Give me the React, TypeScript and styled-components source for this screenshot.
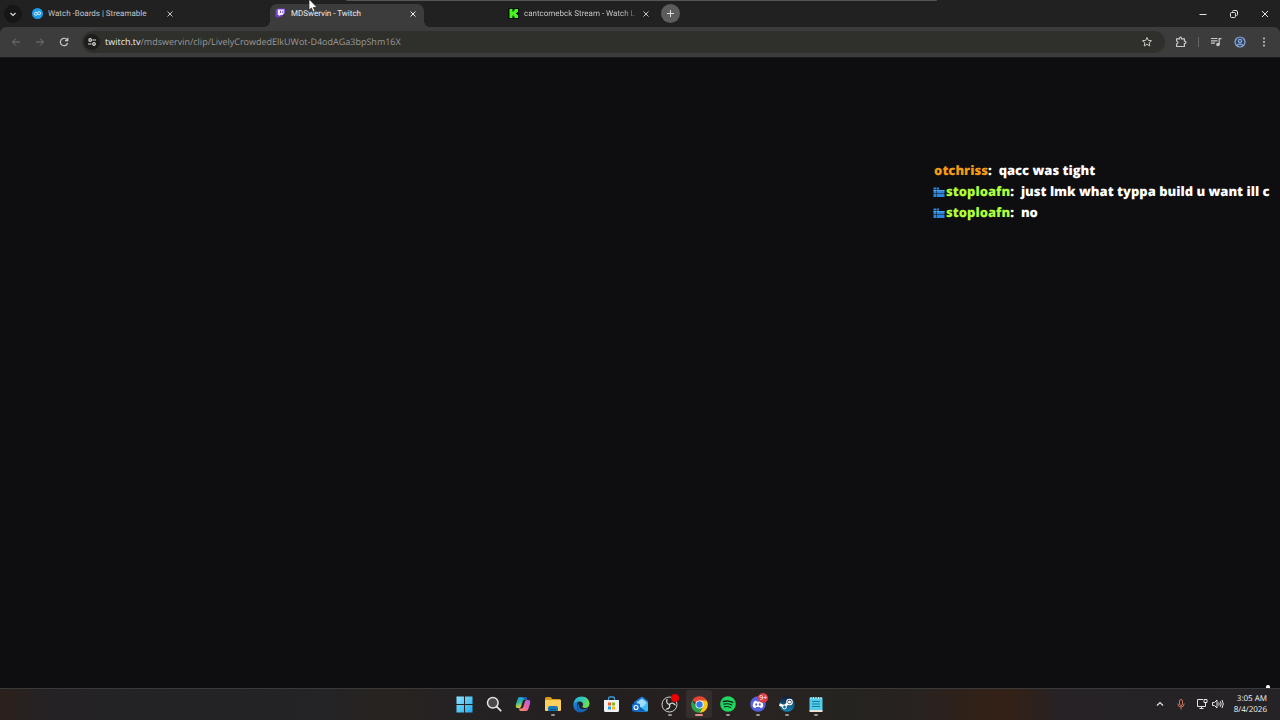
import React from "react";
import styled, { createGlobalStyle, css } from "styled-components";

const GlobalStyle = createGlobalStyle`
  * { box-sizing: border-box; }
  body { margin: 0; background: #0e0e10; font-family: "Open Sans", "Noto Sans", sans-serif; color: #e3e3e3; text-rendering: geometricPrecision; }
  button, input { font: inherit; color: inherit; }
  svg { display: block; flex: none; }
`;

const Desktop = styled.div`
  position: relative;
  display: flex;
  flex-direction: column;
  min-height: 100vh;
  overflow: hidden;
`;

const plainButton = css`
  display: flex;
  align-items: center;
  justify-content: center;
  flex: none;
  padding: 0;
  border: 0;
  background: none;
`;

const TabStrip = styled.header`
  display: flex;
  align-items: center;
  height: 27px;
  padding-left: 4px;
  background: #212121;
`;

const RoundButton = styled.button<{ $size: number; $bg: string; $color?: string }>`
  ${plainButton}
  width: ${(p) => p.$size}px;
  height: ${(p) => p.$size}px;
  border-radius: 50%;
  background: ${(p) => p.$bg};
  color: ${(p) => p.$color ?? "#dcdcdc"};
`;

const NewTab = styled(RoundButton)`
  margin-left: 4px;
`;

const Tab = styled.div<{ $active?: boolean; $gap: number }>`
  position: relative;
  display: flex;
  align-items: center;
  flex: none;
  width: 154px;
  height: 23px;
  margin-left: ${(p) => p.$gap}px;
  align-self: flex-end;
  padding: 0 5px 4px 5px;
  border-radius: 7px 7px 0 0;
  background: ${(p) => (p.$active ? "#3c3c3c" : "transparent")};
  color: ${(p) => (p.$active ? "#eeeeee" : "#c4c4c4")};
  ${(p) =>
    p.$active &&
    css`
      &::before, &::after {
        content: "";
        position: absolute;
        bottom: 0;
        width: 6px;
        height: 6px;
      }
      &::before { left: -6px; background: radial-gradient(circle at 0 0, transparent 6px, #3c3c3c 6px); }
      &::after { right: -6px; background: radial-gradient(circle at 100% 0, transparent 6px, #3c3c3c 6px); }
    `}
`;

const TabTitle = styled.span<{ $fade?: boolean }>`
  flex: 1;
  min-width: 0;
  margin-left: 5px;
  overflow: hidden;
  white-space: nowrap;
  font-family: Roboto, "Open Sans", sans-serif;
  font-size: 8px;
  line-height: 12px;
  ${(p) => p.$fade && css`mask-image: linear-gradient(to right, #000 88%, transparent 104%);`}
`;

const TabClose = styled.button`
  ${plainButton}
  width: 12px;
  height: 12px;
  margin-left: 4px;
`;

const WindowButtons = styled.div`
  display: flex;
  margin-left: auto;
`;

const WindowButton = styled.button`
  ${plainButton}
  width: 31px;
  height: 27px;
`;

const Toolbar = styled.nav`
  display: flex;
  align-items: center;
  height: 31px;
  padding: 0 4px 0 4px;
  background: #3c3c3c;
  border-bottom: 1px solid #1a1a1b;
  border-radius: 6px 6px 0 0;
`;

const ToolbarBack = styled.div`
  background: #212121;
`;

const ToolButton = styled.button<{ $dim?: boolean }>`
  ${plainButton}
  width: 24px;
  height: 24px;
  color: ${(p) => (p.$dim ? "#757575" : "#c7c7c7")};
`;

const AddressBar = styled.div`
  display: flex;
  align-items: center;
  flex: 1;
  min-width: 0;
  height: 22px;
  margin: 0 4px 0 6px;
  padding: 0 6px 0 2px;
  border-radius: 11px;
  background: #2f2f2b;
`;

const Url = styled.a`
  flex: 1;
  min-width: 0;
  margin-left: 5px;
  overflow: hidden;
  white-space: nowrap;
  font-size: 9px;
  line-height: 14px;
  color: #9b9b99;
  text-decoration: none;
  b { font-weight: 500; color: #f0f0f0; }
`;

const Divider = styled.span`
  width: 1px;
  height: 10px;
  margin: 0 5px;
  background: #666;
`;

const Page = styled.main`
  flex: 1;
  min-width: 0;
  overflow: hidden;
  padding-top: 102px;
  background: #0e0e10;
`;

const Chat = styled.ul`
  margin: 0 0 0 72.9%;
  padding: 0;
  list-style: none;
`;

const ChatLine = styled.li`
  display: flex;
  align-items: center;
  height: 21px;
  white-space: nowrap;
  font-size: 13px;
  line-height: 21px;
  font-weight: 800;
  color: #fff;
`;

const ChatName = styled.span<{ $color: string }>`
  margin-left: 1px;
  color: ${(p) => p.$color};
`;

const ChatText = styled.span`
  margin-left: 7px;
`;

const Taskbar = styled.footer`
  display: grid;
  grid-template-columns: 1fr 382px 1fr;
  height: 32px;
  border-top: 1px solid #3a3a3a;
  background: linear-gradient(to right, #2c201c 0, #242224 4%, #232326 20%, #242325 26%, #28231f 30%, #252224 36%,
    #241f1f 48%, #292322 60%, #252320 66%, #282220 72%, #332117 77%, #332117 79%, #262225 83%, #252326 100%);
`;

const Apps = styled.div`
  display: grid;
  grid-template-columns: repeat(13, 1fr);
  grid-column: 2;
  padding-left: 1px;
`;

const AppButton = styled.button<{ $running?: boolean; $active?: boolean }>`
  ${plainButton}
  position: relative;
  height: 30px;
  &::before {
    content: "";
    position: absolute;
    inset: 1px 2px 1px;
    border-radius: 3px;
    background: ${(p) => (p.$active ? "#352e2c" : "transparent")};
  }
  &::after {
    content: "";
    position: absolute;
    bottom: 3px;
    left: calc(50% - ${(p) => (p.$active ? 4 : 2)}px);
    width: ${(p) => (p.$active ? 8 : 4)}px;
    height: 2px;
    border-radius: 1px;
    background: ${(p) => (p.$active ? "#e58f80" : p.$running ? "#969392" : "transparent")};
  }
  svg { position: relative; }
`;

const Badge = styled.span<{ $dot?: boolean }>`
  position: absolute;
  top: ${(p) => (p.$dot ? 5 : 4)}px;
  right: ${(p) => (p.$dot ? 5 : 4)}px;
  width: ${(p) => (p.$dot ? 8 : 10)}px;
  height: ${(p) => (p.$dot ? 8 : 10)}px;
  border-radius: 50%;
  background: ${(p) => (p.$dot ? "#ee0000" : "#d83b46")};
  color: #fff;
  font-size: 7px;
  line-height: 10px;
  text-align: center;
`;

const Tray = styled.div`
  display: flex;
  align-items: center;
  justify-content: flex-end;
  padding: 0 13px 1px 0;
`;

const TrayButton = styled.button<{ $width: number; $color?: string }>`
  ${plainButton}
  width: ${(p) => p.$width}px;
  height: 28px;
  color: ${(p) => p.$color ?? "#e4e4e4"};
`;

const Clock = styled.time`
  margin-left: 6px;
  width: 37px;
  white-space: nowrap;
  display: flex;
  flex-direction: column;
  align-items: flex-end;
  font-size: 8px;
  line-height: 11px;
  color: #f2f2f2;
`;

const TopOverlay = styled.div`
  position: absolute;
  top: 0;
  left: 27%;
  right: 26.8%;
  height: 1px;
  background: #555;
  border-radius: 0 0 4px 4px;
`;

const Pointer = styled.svg`
  position: absolute;
  top: 0;
  left: 308px;
`;

const PagePip = styled.span`
  position: absolute;
  right: 10px;
  bottom: 32px;
  width: 4px;
  height: 3px;
  border-radius: 2px 2px 0 0;
  background: #fff;
`;

const Stroke = ({ size = 12, box = 12, w = 1, d }: { size?: number; box?: number; w?: number; d: string }) => (
  <svg width={size} height={size} viewBox={`0 0 ${box} ${box}`} fill="none" stroke="currentColor" strokeWidth={w}>
    <path d={d} />
  </svg>
);

const CloseIcon = () => <Stroke size={10} box={10} d="M2.500 2.500l5 5M7.500 2.500l-5 5" />;

const StreamableIcon = () => (
  <svg width="11" height="11" viewBox="0 0 22 22">
    <circle cx="11" cy="11" r="11" fill="#1b9bea" />
    <g fill="none" stroke="#d8f2ff" strokeWidth="2">
      <circle cx="7.800" cy="11.500" r="3" />
      <circle cx="14.200" cy="10.500" r="3" />
    </g>
  </svg>
);

const TwitchIcon = () => (
  <svg width="11" height="11" viewBox="0 0 24 24">
    <path d="M5 1L1 5v14h5v4l4-4h4l8-8V1z" fill="#7542c9" />
    <path d="M6 3h14v8l-4 4h-4l-3 3v-3H6z" fill="#f3ecff" />
    <path d="M11 6h2v5h-2zM16 6h2v5h-2z" fill="#7542c9" />
  </svg>
);

const KickIcon = () => (
  <svg width="11" height="11" viewBox="0 0 11 11">
    <path fill="#071006" d="M0 0h11v11H0z" />
    <path fill="#45f51b" d="M1.500 1h3v2.500h1V2.500h1V1H10v3H9v1H8v1h1v1h1v3H6.500V8.500h-1v-1h-1V10h-3z" />
  </svg>
);

const TwitchBadge = () => (
  <svg width="12" height="12" viewBox="0 0 12 12">
    <path fill="#2b84dd" d="M.5 1.500h3v2h-3zM4 1.500h2v2H4zM.5 4h3v3h-3zM4 4h7.500v3H4zM.5 7.500h3v3.500h-3zM4 7.500h7.500v3.500H4z" />
    <path fill="#50a8ea" d="M4 4h7.500v1H4zM.5 4h3v1h-3z" />
  </svg>
);

const StartIcon = () => (
  <svg width="17" height="17" viewBox="0 0 17 17">
    <defs><linearGradient id="win" x2="1" y2="1"><stop stopColor="#8be4ff" /><stop offset="1" stopColor="#20a8e8" /></linearGradient></defs>
    <path fill="url(#win)" d="M0.500 0.500h7.500v7.500H0.500zM9 0.500h7.500v7.500H9zM0.500 9h7.500v7.500H0.500zM9 9h7.500v7.500H9z" />
  </svg>
);

const SearchIcon = () => (
  <svg width="16" height="16" viewBox="0 0 16 16" fill="#4b4a49" stroke="#e5e5e5" strokeWidth="1.500">
    <circle cx="6.800" cy="6.800" r="5.300" /><path d="M10.700 10.700l4 4" strokeWidth="1.800" strokeLinecap="round" />
  </svg>
);

const CopilotIcon = () => (
  <svg width="16" height="16" viewBox="0 0 32 32">
    <defs>
      <linearGradient id="cpa" x1="0" y1="0" x2="0.300" y2="1"><stop stopColor="#1c9df0" /><stop offset=".5" stopColor="#25b7a0" /><stop offset="1" stopColor="#f0cf32" /></linearGradient>
      <linearGradient id="cpb" x1="1" y1="0" x2="0" y2="1"><stop stopColor="#a35bf0" /><stop offset=".55" stopColor="#f0679b" /><stop offset="1" stopColor="#ff9a4f" /></linearGradient>
    </defs>
    <path d="M10 2h10c3 0 3.500 2 4.500 5h-5c-3 0-4 2-5 6l-2 7c-1 3-2 4-5 4H5c-4 0-4-4-3-8l3-9c1-3 2-5 5-5z" fill="url(#cpa)" />
    <path d="M22 30H12c-3 0-3.500-2-4.500-5h5c3 0 4-2 5-6l2-7c1-3 2-4 5-4H27c4 0 4 4 3 8l-3 9c-1 3-2 5-5 5z" fill="url(#cpb)" />
    <path d="M10 2h10c3 0 3.500 2 4.500 5h-4c-2-.5-3-3-6-4z" fill="#1c55c8" />
  </svg>
);

const FolderIcon = () => (
  <svg width="18" height="16" viewBox="0 0 18 16">
    <path d="M1 2.500Q1 1 2.500 1h4l2 2H15.500Q17 3 17 4.500V9H1z" fill="#d99a18" />
    <rect x="1" y="4" width="16" height="11" rx="1" fill="#ffd05b" />
    <path d="M4 15v-3q0-2 2-2h6q2 0 2 2v3z" fill="#1878bd" />
    <path d="M6 13h6v1H6z" fill="#0b528f" />
  </svg>
);

const EdgeIcon = () => (
  <svg width="17" height="17" viewBox="0 0 34 34">
    <defs>
      <linearGradient id="eda" x2="1" y2=".3"><stop stopColor="#28aee8" /><stop offset=".6" stopColor="#35c9b4" /><stop offset="1" stopColor="#6fdc55" /></linearGradient>
      <linearGradient id="edb" x2="1" y2="1"><stop stopColor="#1b8ee0" /><stop offset="1" stopColor="#104ea0" /></linearGradient>
    </defs>
    <path d="M1 16C2 7 8 1 17 1c10 0 16 7 16 14 0 6-4 9-9 9-4 0-6-2-5-4 3-4 0-9-6-9C7 11 3 13 1 18z" fill="url(#eda)" />
    <path d="M1 17c1-5 6-7 11-6-3 2-4 5-4 9 0 7 5 12 12 12-2 1-4 1-5 1C7 33 0 26 1 17z" fill="url(#edb)" />
    <path d="M13 15c-3 8 3 16 17 9-4 7-9 8-13 8-8-1-12-13-4-17z" fill="#1766b5" />
  </svg>
);

const StoreIcon = () => (
  <svg width="17" height="17" viewBox="0 0 17 17">
    <path d="M5.500 5V2.500q0-1.500 1.500-1.500h3q1.500 0 1.500 1.500V5" fill="none" stroke="#3d9bd7" strokeWidth="1.300" />
    <path d="M1 4h15v10.500q0 1.500-1.500 1.500h-12Q1 16 1 14.500z" fill="#f0f1f3" />
    <path fill="#f15a29" d="M5 6.500h3v3H5z" /><path fill="#80bb20" d="M9 6.500h3v3H9z" />
    <path fill="#21a3e8" d="M5 10.500h3v3H5z" /><path fill="#fbb91c" d="M9 10.500h3v3H9z" />
  </svg>
);

const OutlookIcon = () => (
  <svg width="17" height="16" viewBox="0 0 17 16">
    <path d="M2 6l7-5q1-.5 2 0l5 4v9q0 1.500-1.500 1.500H4Q2 15.500 2 14z" fill="#187bd8" />
    <path d="M5 6l5-3.500L14.500 6v3l-5 3L5 9z" fill="#9fdcfa" />
    <path d="M16 6v8q0 1.500-1.500 1.500H5l6-5z" fill="#37bdf4" />
    <path d="M2 6l12 9.500H4Q2 15.500 2 14z" fill="#125cb7" />
    <rect x="0" y="7.500" width="8" height="8" rx="1.500" fill="#0f6bc9" />
    <circle cx="4" cy="11.500" r="2" fill="none" stroke="#fff" strokeWidth="1.100" />
  </svg>
);

const ObsIcon = () => (
  <svg width="17" height="17" viewBox="0 0 34 34">
    <circle cx="17" cy="17" r="15" fill="#242122" stroke="#d5d2d2" strokeWidth="2" />
    <g fill="none" stroke="#d5d2d2" strokeWidth="2.600" strokeLinecap="round">
      <path d="M12 7c-2 5 0 9 5 10" />
      <path d="M12 7c-2 5 0 9 5 10" transform="rotate(120 17 17)" />
      <path d="M12 7c-2 5 0 9 5 10" transform="rotate(240 17 17)" />
    </g>
  </svg>
);

const ChromeIcon = () => (
  <svg width="17" height="17" viewBox="0 0 34 34">
    <path d="M17 17L2.700 8.750A16.500 16.500 0 0 1 31.300 8.750z" fill="#e84435" />
    <path d="M31.300 8.750A16.500 16.500 0 0 1 17 33.500l7-12.500-7-12.250z" fill="#fdc518" />
    <path d="M2.700 8.750A16.500 16.500 0 0 0 17 33.500l7.200-12.400-14.300 0z" fill="#2ca24c" />
    <circle cx="17" cy="17" r="8.200" fill="#fff" /><circle cx="17" cy="17" r="6.400" fill="#3479e5" />
  </svg>
);

const SpotifyIcon = () => (
  <svg width="16" height="16" viewBox="0 0 16 16">
    <circle cx="8" cy="8" r="7.800" fill="#20d760" />
    <g fill="none" stroke="#13251a" strokeLinecap="round">
      <path d="M3.300 5.500q5-1.500 9.500.9" strokeWidth="1.500" /><path d="M3.800 8.200q4.300-1.200 8 .8" strokeWidth="1.200" /><path d="M4.200 10.700q3.600-1 6.700.8" />
    </g>
  </svg>
);

const DiscordIcon = () => (
  <svg width="16" height="16" viewBox="0 0 32 32">
    <circle cx="16" cy="16" r="15.500" fill="#5661df" />
    <path d="M12 9l-4 2c-2 4-3 7-2 11 2 1 3 2 5 2l1-2h8l1 2c2 0 3-1 5-2 1-4 0-7-2-11l-4-2-1 2h-6z" fill="#fff" />
    <ellipse cx="12.500" cy="17" rx="2" ry="2.400" fill="#5661df" /><ellipse cx="19.500" cy="17" rx="2" ry="2.400" fill="#5661df" />
  </svg>
);

const SteamIcon = () => (
  <svg width="16" height="16" viewBox="0 0 32 32">
    <defs><linearGradient id="stm" x2="0" y2="1"><stop stopColor="#111a34" /><stop offset="1" stopColor="#1488bd" /></linearGradient></defs>
    <circle cx="16" cy="16" r="15.500" fill="url(#stm)" />
    <path d="M1 17l10 4 6-6" stroke="#fff" strokeWidth="5" fill="none" />
    <circle cx="21" cy="12" r="5.500" fill="#1b3555" stroke="#fff" strokeWidth="2.400" /><circle cx="21" cy="12" r="3" fill="#fff" />
    <circle cx="11" cy="22" r="3.800" fill="#1a6b99" stroke="#fff" strokeWidth="2" />
  </svg>
);

const NotepadIcon = () => (
  <svg width="14" height="17" viewBox="0 0 14 17">
    <rect x="0.500" y="1.500" width="13" height="14" rx="1" fill="#55cbea" />
    <path d="M.5 14h13v1.500q0 .5-1 .5h-11q-1 0-1-.5z" fill="#eee1d6" />
    <path d="M3 5.500h8M3 8h8M3 10.500h8" stroke="#147fa5" />
    <path d="M2 1v2M4.500 1v2M7 1v2M9.500 1v2M12 1v2" stroke="#c5eff8" />
  </svg>
);

const apps: { name: string; icon: React.ReactNode; running?: boolean; active?: boolean; badge?: React.ReactNode }[] = [
  { name: "Start", icon: <StartIcon /> },
  { name: "Search", icon: <SearchIcon /> },
  { name: "Copilot", icon: <CopilotIcon /> },
  { name: "File Explorer", icon: <FolderIcon />, running: true },
  { name: "Microsoft Edge", icon: <EdgeIcon /> },
  { name: "Microsoft Store", icon: <StoreIcon /> },
  { name: "Outlook", icon: <OutlookIcon /> },
  { name: "OBS Studio", icon: <ObsIcon />, running: true, badge: <Badge $dot /> },
  { name: "Google Chrome", icon: <ChromeIcon />, active: true },
  { name: "Spotify", icon: <SpotifyIcon />, running: true },
  { name: "Discord", icon: <DiscordIcon />, running: true, badge: <Badge>9+</Badge> },
  { name: "Steam", icon: <SteamIcon />, running: true },
  { name: "Notepad", icon: <NotepadIcon />, running: true },
];

const tabs = [
  { title: "Watch -Boards | Streamable", icon: <StreamableIcon />, gap: 5 },
  { title: "MDSwervin - Twitch", icon: <TwitchIcon />, gap: 89, active: true },
  { title: "cantcomebck Stream - Watch L", icon: <KickIcon />, gap: 79, fade: true },
];

const messages = [
  { name: "otchriss", color: "#f59b12", text: "qacc was tight" },
  { name: "stoploafn", color: "#b0ff38", text: "just lmk what typpa build u want ill c", badge: true },
  { name: "stoploafn", color: "#b0ff38", text: "no", badge: true },
];

export default function App() {
  return (
    <Desktop>
      <GlobalStyle />
      <TabStrip>
        <RoundButton $size={18} $bg="#161616" aria-label="Search tabs">
          <Stroke size={10} box={10} w={1.2} d="M2.500 4l2.500 2.500L7.500 4" />
        </RoundButton>
        {tabs.map((t) => (
          <Tab key={t.title} $active={t.active} $gap={t.gap}>
            {t.icon}
            <TabTitle $fade={t.fade}>{t.title}</TabTitle>
            <TabClose aria-label={`Close ${t.title}`}><CloseIcon /></TabClose>
          </Tab>
        ))}
        <NewTab $size={19} $bg="#5c5c5c" aria-label="New tab">
          <Stroke size={9} box={9} d="M4.500 1v7M1 4.500h7" />
        </NewTab>
        <WindowButtons>
          <WindowButton aria-label="Minimize"><Stroke size={10} box={10} d="M1.500 5.500h7" /></WindowButton>
          <WindowButton aria-label="Restore">
            <Stroke size={10} box={10} d="M2.500 3.500h3q1 0 1 1v3q0 1-1 1h-3q-1 0-1-1v-3q0-1 1-1zM3.500 2.500q0-1 1-1H7q1.500 0 1.500 1.500V5.500q0 1-1 1" />
          </WindowButton>
          <WindowButton aria-label="Close window"><Stroke size={10} box={10} d="M2 2l6 6M8 2l-6 6" /></WindowButton>
        </WindowButtons>
      </TabStrip>
      <ToolbarBack>
        <Toolbar>
          <ToolButton $dim aria-label="Back"><Stroke d="M10 6H2.500M6 2.500L2.500 6 6 9.500" /></ToolButton>
          <ToolButton $dim aria-label="Forward"><Stroke d="M2 6h7.500M6 2.500L9.500 6 6 9.500" /></ToolButton>
          <ToolButton aria-label="Reload"><Stroke w={1.2} d="M9.600 7A3.700 3.700 0 1 1 8.700 3.400L9.800 4.500M9.800 1.800v2.900H7" /></ToolButton>
          <AddressBar>
            <RoundButton $size={16} $bg="#1d1d1b" aria-label="Site information">
              <Stroke size={10} box={10} w={1.2} d="M4.500 3a1.300 1.300 0 1 0-2.600 0 1.300 1.300 0 1 0 2.600 0M5.500 3H9M1 7h3.500M8.300 7a1.300 1.300 0 1 0-2.600 0 1.300 1.300 0 1 0 2.600 0" />
            </RoundButton>
            <Url href="#"><b>twitch.tv</b>/mdswervin/clip/LivelyCrowdedElkUWot-D4odAGa3bpShm16X</Url>
            <ToolButton aria-label="Bookmark this tab">
              <Stroke d="M6 1.500l1.300 2.900 3.200.3-2.400 2.100.7 3.200L6 8.300 3.200 10l.7-3.200L1.500 4.700l3.200-.3z" />
            </ToolButton>
          </AddressBar>
          <ToolButton aria-label="Extensions">
            <Stroke w={1.2} d="M1.600 2.800H4.500q0-1.600 1.100-1.600t1.100 1.600H9.400V5.200q1.600 0 1.600 1.200T9.400 7.600v2.900H1.600V8q1.300-.3 1.300-1.500T1.600 5z" />
          </ToolButton>
          <Divider />
          <ToolButton aria-label="Media controls">
            <svg width="12" height="12" viewBox="0 0 12 12" fill="none" stroke="currentColor" strokeWidth="1.200">
              <path d="M1 2.500h6.500M1 4.800h6.500M1 7.100h4M9.200 8.500V2.600h2.300" /><circle cx="8" cy="8.500" r="1.200" fill="currentColor" />
            </svg>
          </ToolButton>
          <ToolButton aria-label="Profile">
            <svg width="12" height="12" viewBox="0 0 12 12" fill="none" stroke="#8fabd8" strokeWidth="1.200">
              <circle cx="6" cy="6" r="5" fill="#2e4367" /><circle cx="6" cy="4.900" r="1.600" /><path d="M3 9.500q3-2.600 6 0" />
            </svg>
          </ToolButton>
          <ToolButton aria-label="Menu">
            <svg width="12" height="12" viewBox="0 0 12 12" fill="currentColor">
              <circle cx="6" cy="2.500" r="1" /><circle cx="6" cy="6" r="1" /><circle cx="6" cy="9.500" r="1" />
            </svg>
          </ToolButton>
        </Toolbar>
      </ToolbarBack>
      <Page>
        <Chat>
          {messages.map((m, i) => (
            <ChatLine key={i}>
              {m.badge && <TwitchBadge />}
              <ChatName $color={m.color}>{m.name}</ChatName>:<ChatText>{m.text}</ChatText>
            </ChatLine>
          ))}
        </Chat>
      </Page>
      <PagePip />
      <Taskbar>
        <Apps>
          {apps.map((a) => (
            <AppButton key={a.name} aria-label={a.name} $running={a.running} $active={a.active}>
              {a.icon}
              {a.badge}
            </AppButton>
          ))}
        </Apps>
        <Tray>
          <TrayButton $width={20} aria-label="Show hidden icons"><Stroke size={10} box={10} w={1.2} d="M2 6.500l3-3 3 3" /></TrayButton>
          <TrayButton $width={22} $color="#c96f55" aria-label="Microphone in use">
            <Stroke d="M6 1.500q1.500 0 1.500 1.500v3Q7.500 7.500 6 7.500T4.500 6V3Q4.500 1.500 6 1.500M2.800 5.500q0 3.500 3.200 3.500t3.200-3.500M6 9v2.500" />
          </TrayButton>
          <TrayButton $width={20} aria-label="Network">
            <Stroke d="M7 1.500H1.500v7h8V6M3.500 10.500h4M5.500 8.500v2M8 1.500h3v3H8zM9.500 4.500v2" />
          </TrayButton>
          <TrayButton $width={12} aria-label="Volume">
            <Stroke d="M.5 4.500h2L5 2v8L2.500 7.500h-2zM6.700 4.500q1 1.500 0 3M8.300 3.200q1.800 2.800 0 5.600M10 2q2.600 4 0 8" />
          </TrayButton>
          <Clock><span>3:05 AM</span><span>8/4/2026</span></Clock>
        </Tray>
      </Taskbar>
      <TopOverlay />
      <Pointer width="12" height="13" viewBox="0 0 12 13">
        <path d="M1 0v10l2.500-2L5 12l2-.8-1.700-3.700H9L2 0z" fill="#fff" stroke="#222" strokeWidth=".7" />
      </Pointer>
    </Desktop>
  );
}
